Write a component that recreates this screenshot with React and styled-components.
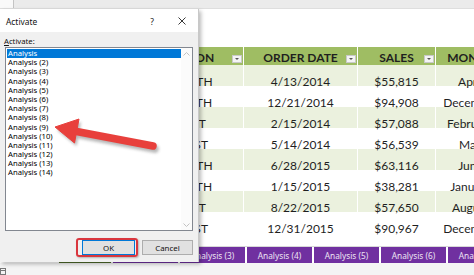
import React from 'react';
import styled, { createGlobalStyle } from 'styled-components';

const Global = createGlobalStyle`
  html, body { margin: 0; padding: 0; background: #fff; }
  body { width: 474px; height: 275px; overflow: hidden; }
`;

const Screen = styled.div`
  position: relative;
  width: 474px;
  height: 275px;
  overflow: hidden;
  background: #fff;
  display: flex;
  flex-direction: column;
  font-family: "Noto Sans", "Liberation Sans", Arial, sans-serif;
`;

const TopBar = styled.div`
  flex: none;
  height: 9px;
  box-sizing: border-box;
  background: #ebebeb;
  border-bottom: 1px solid #dedede;
  display: flex;
`;

const NameCell = styled.div`
  width: 13px;
  background: #f9f9f9;
  border-right: 1px solid #c4c4c4;
`;

const Sheet = styled.div`
  flex: 1;
  display: flex;
  flex-direction: column;
`;

const TableWrap = styled.div`
  padding: 38px 0 0 140px;
  display: flex;
  flex-direction: column;
`;

const Row = styled.div`
  display: grid;
  grid-template-columns: 104px 114px 78px 70px 60px;
  height: ${p => (p.$header ? 18 : 21)}px;
  background: ${p => (p.$header ? '#9fbd63' : p.$band ? '#ebf1de' : '#ffffff')};
`;

const Cell = styled.div`
  position: relative;
  display: flex;
  align-items: flex-end;
  justify-content: center;
  border-right: 1px solid #ffffff;
  padding-bottom: 0;
  font-family: Lato, "Open Sans", sans-serif;
  font-size: 12px;
  line-height: ${p => (p.$header ? 14 : 9)}px;
  font-weight: ${p => (p.$header ? 700 : 400)};
  color: #1f1f1f;
  white-space: nowrap;
`;

const DropBtn = styled.span`
  position: absolute;
  right: 1px;
  bottom: 2px;
  width: 10px;
  height: 8px;
  box-sizing: border-box;
  background: #f4f4f4;
  border: 1px solid #c9c9c9;
  display: flex;
  align-items: center;
  justify-content: center;
`;

const Spacer = styled.div`
  flex: 1;
`;

const TabStrip = styled.div`
  flex: none;
  height: 17px;
  box-sizing: border-box;
  border-top: 1px solid #d8d8d8;
  background: #fff;
  display: flex;
  gap: 2px;
  padding-left: 59px;
`;

const Tab = styled.div`
  flex: none;
  width: ${p => p.$w}px;
  height: 16px;
  box-sizing: border-box;
  background: ${p => (p.$active ? '#ffffff' : '#7030a0')};
  border-bottom: ${p => (p.$active ? '2px solid #4f6b2a' : '0')};
  color: ${p => (p.$active ? '#2a2a2a' : '#ece4f3')};
  font-size: 8.3px;
  display: flex;
  align-items: center;
  justify-content: center;
  white-space: nowrap;
`;

const StatusBar = styled.div`
  flex: none;
  height: 12px;
  background: #f4f4f4;
  display: flex;
  align-items: flex-end;
`;

/* Dialog */
const Dialog = styled.div`
  position: absolute;
  left: 0;
  top: 9px;
  width: 199px;
  height: 253px;
  box-sizing: border-box;
  border-right: 1px solid #c8c8c8;
  box-shadow: 2px 2px 4px rgba(0, 0, 0, 0.28);
  display: flex;
  flex-direction: column;
  background: #f0f0f0;
`;

const TitleBar = styled.div`
  flex: none;
  height: 23px;
  background: #fff;
  display: flex;
  align-items: center;
  padding-left: 6px;
  padding-top: 1px;
  box-sizing: border-box;
  font-size: 8.4px;
  color: #111;
`;

const TitleText = styled.span`
  flex: 1;
`;

const TitleBtn = styled.span`
  width: ${p => p.$w}px;
  display: flex;
  justify-content: center;
  align-items: center;
  font-size: 8.5px;
  color: #222;
`;

const Body = styled.div`
  flex: 1;
  display: flex;
  flex-direction: column;
  padding: 4px 5px 7px 5px;
`;

const Label = styled.div`
  font-size: 7.7px;
  line-height: 10px;
  color: #111;
  margin-left: -1px;
  margin-bottom: 1px;
  u { text-decoration: underline; }
`;

const ListBox = styled.div`
  height: 184px;
  box-sizing: border-box;
  border: 1px solid #828790;
  background: #fff;
  display: flex;
`;

const Items = styled.div`
  flex: 1;
  padding: 1px 0 0 1px;
  display: flex;
  flex-direction: column;
`;

const Item = styled.div`
  height: 9.2px;
  line-height: 9.2px;
  font-size: 7.7px;
  padding-left: 1px;
  color: ${p => (p.$sel ? '#fff' : '#000')};
  background: ${p => (p.$sel ? '#0078d7' : 'transparent')};
  white-space: nowrap;
`;

const ScrollBar = styled.div`
  width: 11px;
  background: #fbfbfb;
  display: flex;
  flex-direction: column;
  justify-content: space-between;
  align-items: center;
  padding: 4px 0 3px;
`;

const Buttons = styled.div`
  margin-top: auto;
  display: flex;
  justify-content: flex-end;
  gap: 7px;
`;

const Btn = styled.div`
  position: relative;
  width: ${p => p.$w}px;
  height: 15px;
  box-sizing: border-box;
  background: #e1e1e1;
  border: 1px solid ${p => (p.$def ? '#0078d7' : '#adadad')};
  display: flex;
  align-items: center;
  justify-content: center;
  font-size: 7.9px;
  color: #111;
`;

const Highlight = styled.span`
  position: absolute;
  left: -7px;
  right: -4px;
  top: -3px;
  bottom: -3px;
  border: 2.5px solid #d9363e;
  border-radius: 3px;
  box-shadow: 1px 1px 2px rgba(0, 0, 0, 0.25);
`;

const ArrowLayer = styled.svg`
  position: absolute;
  left: 0;
  top: 0;
  pointer-events: none;
`;

const rows = [
  ['NORTH', '4/13/2014', '$55,815', 'April'],
  ['SOUTH', '12/21/2014', '$94,908', 'December'],
  ['EAST', '2/15/2014', '$57,088', 'February'],
  ['WEST', '5/14/2014', '$56,539', 'May'],
  ['NORTH', '6/28/2015', '$63,116', 'June'],
  ['SOUTH', '1/15/2015', '$38,281', 'January'],
  ['EAST', '8/22/2015', '$57,650', 'August'],
  ['WEST', '12/31/2015', '$90,967', 'December'],
];

const sheets = ['Analysis', 'Analysis (2)', 'Analysis (3)', 'Analysis (4)', 'Analysis (5)', 'Analysis (6)', 'Analysis (7)'];
const listItems = ['Analysis'].concat(Array.from({ length: 13 }, (_, i) => `Analysis (${i + 2})`));

const Caret = () => (
  <svg width="6" height="4" viewBox="0 0 6 4">
    <path d="M1 1 L3 3 L5 1 Z" fill="#555" />
  </svg>
);

const Chevron = ({ up }) => (
  <svg width="7" height="4" viewBox="0 0 7 4">
    <path d={up ? 'M0.5 3.5 L3.5 0.5 L6.5 3.5' : 'M0.5 0.5 L3.5 3.5 L6.5 0.5'} fill="none" stroke="#c2c2c2" strokeWidth="1" />
  </svg>
);

const Header = ({ children }) => (
  <Cell $header>
    {children}
    <DropBtn><Caret /></DropBtn>
  </Cell>
);

export default function App() {
  return (
    <>
      <Global />
      <Screen>
        <TopBar><NameCell /></TopBar>
        <Sheet>
          <TableWrap>
            <Row $header>
              <Header>REGION</Header>
              <Header>ORDER DATE</Header>
              <Header>SALES</Header>
              <Header>MONTH</Header>
              <Cell $header />
            </Row>
            {rows.map((r, i) => (
              <Row key={i} $band={i % 2 === 0}>
                {r.map((v, j) => <Cell key={j}>{v}</Cell>)}
                <Cell />
              </Row>
            ))}
          </TableWrap>
          <Spacer />
          <TabStrip>
            {sheets.map((s, i) => (
              <Tab key={s} $active={i === 0} $w={i === 0 ? 52 : 65}>{s}</Tab>
            ))}
          </TabStrip>
          <StatusBar>
            <svg width="6" height="8" viewBox="0 0 6 8">
              <rect x="0.5" y="1.5" width="5" height="6" fill="none" stroke="#777" strokeWidth="1" />
              <line x1="0.5" y1="3.5" x2="5.5" y2="3.5" stroke="#777" strokeWidth="1" />
            </svg>
          </StatusBar>
        </Sheet>

        <Dialog>
          <TitleBar>
            <TitleText>Activate</TitleText>
            <TitleBtn $w={34}>?</TitleBtn>
            <TitleBtn $w={26}>
              <svg width="8" height="8" viewBox="0 0 8 8">
                <path d="M0.5 0.5 L7.5 7.5 M7.5 0.5 L0.5 7.5" stroke="#222" strokeWidth="0.9" />
              </svg>
            </TitleBtn>
            <TitleBtn $w={3} />
          </TitleBar>
          <Body>
            <Label><u>A</u>ctivate:</Label>
            <ListBox>
              <Items>
                {listItems.map((t, i) => <Item key={t} $sel={i === 0}>{t}</Item>)}
              </Items>
              <ScrollBar>
                <Chevron up />
                <Chevron />
              </ScrollBar>
            </ListBox>
            <Buttons>
              <Btn $w={53} $def>
                OK
                <Highlight />
              </Btn>
              <Btn $w={51}>Cancel</Btn>
            </Buttons>
          </Body>
        </Dialog>

        <ArrowLayer width="474" height="275" viewBox="0 0 474 275">
          <defs>
            <filter id="sh" x="-20%" y="-40%" width="140%" height="180%">
              <feGaussianBlur stdDeviation="1.5" />
            </filter>
          </defs>
          <g transform="translate(2 3)" opacity="0.35" filter="url(#sh)">
            <line x1="74" y1="131" x2="153" y2="146" stroke="#333" strokeWidth="7.5" strokeLinecap="round" />
            <polygon points="55,127 79,119 74.5,143" fill="#333" />
          </g>
          <line x1="74" y1="131" x2="153" y2="146" stroke="#e8403c" strokeWidth="7.5" strokeLinecap="round" />
          <polygon points="55,127 79,119 74.5,143" fill="#e8403c" strokeLinejoin="round" stroke="#e8403c" strokeWidth="1" />
        </ArrowLayer>
      </Screen>
    </>
  );
}
